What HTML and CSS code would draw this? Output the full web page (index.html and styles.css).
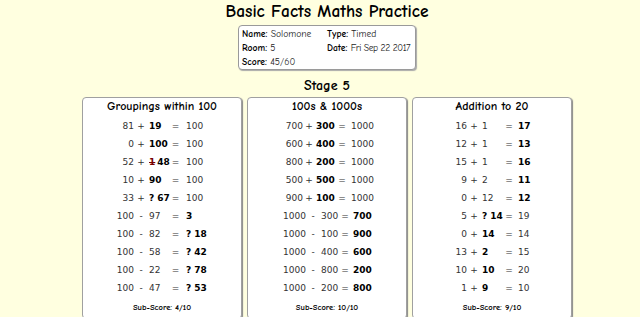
FILE: index.html
```html
<!DOCTYPE html>
<html>
<head>
<meta charset="utf-8">
<link rel="stylesheet" href="styles.css">
</head>
<body>
<div class="page">
  <h1 class="title">Basic Facts Maths Practice</h1>
  <div class="info">
    <div class="cell"><b>Name:</b> Solomone</div>
    <div class="cell"><b>Type:</b> Timed</div>
    <div class="cell"><b>Room:</b> 5</div>
    <div class="cell"><b>Date:</b> <span class="date">Fri Sep 22 2017</span></div>
    <div class="cell"><b>Score:</b> 45/60</div>
  </div>
  <h2 class="stage">Stage 5</h2>
  <div class="panels">
    <div class="panel p1">
      <div class="ptitle">Groupings within 100</div>
      <div class="row"><span class="a">81</span><span class="op">+</span><span class="b ans">19</span><span class="eq">=</span><span class="c">100</span></div>
      <div class="row"><span class="a">0</span><span class="op">+</span><span class="b ans">100</span><span class="eq">=</span><span class="c">100</span></div>
      <div class="row"><span class="a">52</span><span class="op">+</span><span class="b ans"><s class="wrong">1</s>48</span><span class="eq">=</span><span class="c">100</span></div>
      <div class="row"><span class="a">10</span><span class="op">+</span><span class="b ans">90</span><span class="eq">=</span><span class="c">100</span></div>
      <div class="row"><span class="a">33</span><span class="op">+</span><span class="b ans"><span class="q">?</span>67</span><span class="eq">=</span><span class="c">100</span></div>
      <div class="row"><span class="a">100</span><span class="op">-</span><span class="b">97</span><span class="eq">=</span><span class="c ans">3</span></div>
      <div class="row"><span class="a">100</span><span class="op">-</span><span class="b">82</span><span class="eq">=</span><span class="c ans"><span class="q">?</span>18</span></div>
      <div class="row"><span class="a">100</span><span class="op">-</span><span class="b">58</span><span class="eq">=</span><span class="c ans"><span class="q">?</span>42</span></div>
      <div class="row"><span class="a">100</span><span class="op">-</span><span class="b">22</span><span class="eq">=</span><span class="c ans"><span class="q">?</span>78</span></div>
      <div class="row"><span class="a">100</span><span class="op">-</span><span class="b">47</span><span class="eq">=</span><span class="c ans"><span class="q">?</span>53</span></div>
      <div class="sub">Sub-Score: 4/10</div>
    </div>
    <div class="panel p2">
      <div class="ptitle">100s &amp; 1000s</div>
      <div class="row"><span class="a">700</span><span class="op">+</span><span class="b ans">300</span><span class="eq">=</span><span class="c">1000</span></div>
      <div class="row"><span class="a">600</span><span class="op">+</span><span class="b ans">400</span><span class="eq">=</span><span class="c">1000</span></div>
      <div class="row"><span class="a">800</span><span class="op">+</span><span class="b ans">200</span><span class="eq">=</span><span class="c">1000</span></div>
      <div class="row"><span class="a">500</span><span class="op">+</span><span class="b ans">500</span><span class="eq">=</span><span class="c">1000</span></div>
      <div class="row"><span class="a">900</span><span class="op">+</span><span class="b ans">100</span><span class="eq">=</span><span class="c">1000</span></div>
      <div class="row minus"><span class="a">1000</span><span class="op">-</span><span class="b">300</span><span class="eq">=</span><span class="c ans">700</span></div>
      <div class="row minus"><span class="a">1000</span><span class="op">-</span><span class="b">100</span><span class="eq">=</span><span class="c ans">900</span></div>
      <div class="row minus"><span class="a">1000</span><span class="op">-</span><span class="b">400</span><span class="eq">=</span><span class="c ans">600</span></div>
      <div class="row minus"><span class="a">1000</span><span class="op">-</span><span class="b">800</span><span class="eq">=</span><span class="c ans">200</span></div>
      <div class="row minus"><span class="a">1000</span><span class="op">-</span><span class="b">200</span><span class="eq">=</span><span class="c ans">800</span></div>
      <div class="sub">Sub-Score: 10/10</div>
    </div>
    <div class="panel p3">
      <div class="ptitle">Addition to 20</div>
      <div class="row"><span class="a">16</span><span class="op">+</span><span class="b">1</span><span class="eq">=</span><span class="c ans">17</span></div>
      <div class="row"><span class="a">12</span><span class="op">+</span><span class="b">1</span><span class="eq">=</span><span class="c ans">13</span></div>
      <div class="row"><span class="a">15</span><span class="op">+</span><span class="b">1</span><span class="eq">=</span><span class="c ans">16</span></div>
      <div class="row"><span class="a">9</span><span class="op">+</span><span class="b">2</span><span class="eq">=</span><span class="c ans">11</span></div>
      <div class="row"><span class="a">0</span><span class="op">+</span><span class="b">12</span><span class="eq">=</span><span class="c ans">12</span></div>
      <div class="row"><span class="a">5</span><span class="op">+</span><span class="b ans"><span class="q">?</span>14</span><span class="eq">=</span><span class="c">19</span></div>
      <div class="row"><span class="a">0</span><span class="op">+</span><span class="b ans">14</span><span class="eq">=</span><span class="c">14</span></div>
      <div class="row"><span class="a">13</span><span class="op">+</span><span class="b ans">2</span><span class="eq">=</span><span class="c">15</span></div>
      <div class="row"><span class="a">10</span><span class="op">+</span><span class="b ans">10</span><span class="eq">=</span><span class="c">20</span></div>
      <div class="row"><span class="a">1</span><span class="op">+</span><span class="b ans">9</span><span class="eq">=</span><span class="c">10</span></div>
      <div class="sub">Sub-Score: 9/10</div>
    </div>
  </div>
</div>
</body>
</html>
```

FILE: styles.css
```css
html, body {
  margin: 0;
  padding: 0;
  background: #ffffe0;
}
body {
  font-family: "Comic Sans MS", "Comic Neue", "Open Sans", sans-serif;
  color: #000;
  width: 640px;
  height: 317px;
  overflow: hidden;
}
.page {
  display: flex;
  flex-direction: column;
  align-items: center;
  padding-left: 14px;
}
.title {
  margin: 0;
  font-size: 17.4px;
  line-height: 22px;
  font-weight: 700;
  height: 25px;
}
.info {
  width: 178px;
  height: 45px;
  box-sizing: border-box;
  background: #fff;
  border: 1px solid #9a9a9a;
  border-radius: 4px;
  box-shadow: 1px 1px 1px #aaa;
  display: grid;
  grid-template-columns: 85px auto;
  grid-auto-rows: 14px;
  padding: 1px 0 0 3px;
  font-size: 9.6px;
  color: #222;
}
.cell {
  line-height: 14px;
  white-space: nowrap;
}
.cell b {
  font-weight: 700;
  color: #000;
}
.date {
  letter-spacing: -0.4px;
}
.stage {
  margin: 0;
  height: 27px;
  font-size: 14px;
  line-height: 32px;
  font-weight: 700;
}
.panels {
  display: flex;
  gap: 5px;
}
.panel {
  width: 160px;
  height: 222px;
  box-sizing: border-box;
  background: #fff;
  border: 1px solid #a0a0a0;
  border-radius: 4px;
  box-shadow: 1px 1px 1px #888;
  display: flex;
  flex-direction: column;
}
.ptitle {
  text-align: center;
  font-size: 12px;
  line-height: 16px;
  font-weight: 700;
  margin-bottom: 3px;
}
.row {
  display: grid;
  height: 18px;
  line-height: 18px;
  font-family: "DejaVu Sans", Verdana, sans-serif;
  font-size: 9px;
  color: #333;
  white-space: nowrap;
}
.p1 .row { grid-template-columns: 51px 14px 20px 15px auto; }
.p1 .b { padding-left: 1px; }
.p1 .c { padding-left: 3px; }
.p2 .row { grid-template-columns: 55px 12px 21px 12px auto; }
.p2 .b { padding-left: 1px; }
.p2 .c { padding-left: 3px; }
.p2 .row.minus { grid-template-columns: 58px 14px 20px 10px auto; }
.p3 .row { grid-template-columns: 54px 14px 22px 12px auto; }
.p3 .b { padding-left: 1px; }
.p3 .c { padding-left: 3px; }
.a { text-align: right; }
.op, .eq { text-align: center; }
.ans {
  font-weight: 700;
  color: #000;
}
.wrong {
  color: #700;
  margin-right: 2px;
}
.q {
  margin-right: 3px;
}
.sub {
  margin-top: 3px;
  text-align: center;
  font-size: 8.5px;
  line-height: 14px;
  font-weight: 700;
}
```
